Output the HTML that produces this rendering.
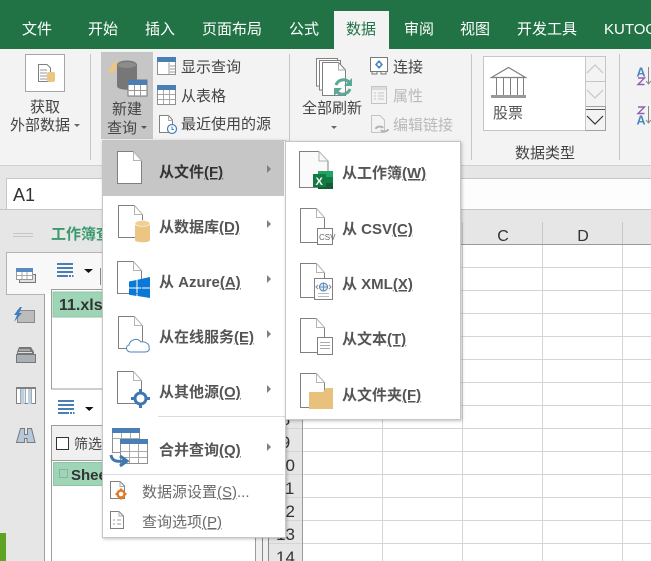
<!DOCTYPE html>
<html><head><meta charset="utf-8"><style>
html,body{margin:0;padding:0;background:#fff;width:651px;height:561px;overflow:hidden}
svg{display:block}
text{font-family:"Liberation Sans","Noto Sans CJK SC",sans-serif;font-size:15px;fill:#444}
.t{fill:#fff}
.b{font-weight:700;fill:#555}
.g{fill:#b9b9b9}
.n{font-size:17px;fill:#333}
.u{text-decoration:underline}
</style></head><body>
<svg width="651" height="561" viewBox="0 0 651 561" xmlns="http://www.w3.org/2000/svg">
<defs>
<g id="d"><path d="M.5 .5H16.500L24.500 9.500V32.500H.5Z" fill="#fff" stroke="none"/><path d="M16.500 .5H.5V32.500H24.500V9.500" fill="none" stroke="#808080"/><path d="M16.500 .5V9.500H24.500L16.500 .5" fill="none" stroke="#b4b4b4"/></g>
<g id="d2"><path d="M.5 .5H16.500L24.500 9.500V34.500H.5Z" fill="#fff" stroke="none"/><path d="M16.500 .5H.5V34.500H24.500V9.500" fill="none" stroke="#808080"/><path d="M16.500 .5V9.500H24.500L16.500 .5" fill="none" stroke="#b4b4b4"/></g>
<g id="bars" fill="#4a7fb5"><rect width="16" height="2"/><rect y="4" width="16" height="2"/><rect y="8" width="16" height="2"/><rect y="12" width="11" height="2"/><rect x="12" y="12" width="2" height="2"/><rect x="15" y="12" width="1.500" height="2"/></g>
<filter id="s" x="-10%" y="-10%" width="120%" height="120%"><feDropShadow dx="1" dy="1" stdDeviation="1.500" flood-color="#000" flood-opacity=".25"/></filter>
</defs>

<!-- base -->
<rect width="651" height="561" fill="#e6e6e6"/>
<!-- header -->
<rect width="651" height="49" fill="#217346"/>
<rect x="334" y="11" width="55" height="38" fill="#f3f3f3"/>
<text class="t" x="22" y="34">文件</text>
<text class="t" x="88" y="34">开始</text>
<text class="t" x="145" y="34">插入</text>
<text class="t" x="202" y="34">页面布局</text>
<text class="t" x="289" y="34">公式</text>
<text x="346" y="34" style="fill:#217346">数据</text>
<text class="t" x="404" y="34">审阅</text>
<text class="t" x="460" y="34">视图</text>
<text class="t" x="517" y="34">开发工具</text>
<text class="t" x="604" y="34">KUTOOLS</text>

<!-- ribbon -->
<rect y="49" width="651" height="116" fill="#f3f3f3"/>
<rect y="165" width="651" height="1" fill="#cfcfcf"/>
<g fill="#c6c6c6"><rect x="90" y="54" width="1" height="106"/><rect x="289" y="54" width="1" height="106"/><rect x="471" y="54" width="1" height="106"/><rect x="619" y="54" width="1" height="106"/></g>

<!-- get external -->
<rect x="25.500" y="54.500" width="39" height="37" fill="#fff" stroke="#a6a6a6"/>
<path d="M38.500 64.500H47L50.500 68V81.500H38.500Z" fill="#fff" stroke="#808080"/>
<path d="M40 70h7M40 73h7M40 76h7M40 79h7" stroke="#999"/>
<rect x="47" y="72" width="8" height="10" rx="2" fill="#ecc582"/>
<text x="30" y="112">获取</text>
<text x="10" y="130">外部数据</text>
<path d="M74 124h6l-3 3z" fill="#666"/>

<!-- new query -->
<rect x="101" y="52" width="52" height="87" fill="#c6c6c6"/>
<path d="M119 56L107 72l6-.5L107 79l14-15-6 .5z" fill="#ecc582"/>
<path d="M117 65c0-6 20-6 20 0V86c0 5-20 5-20 0Z" fill="#777"/>
<ellipse cx="127" cy="65" rx="9" ry="3" fill="#8c8c8c"/>
<rect x="128" y="80" width="19" height="16" fill="#fff" stroke="#777"/>
<rect x="128" y="80" width="19" height="5" fill="#4a7fb5"/>
<path d="M128 90.500h19M134.500 85v11M140.500 85v11" stroke="#999"/>
<text x="112" y="114">新建</text>
<text x="107" y="133">查询</text>
<path d="M141 126h6l-3 3z" fill="#555"/>

<!-- show queries -->
<rect x="157.500" y="57.500" width="18" height="17" fill="#fff" stroke="#909090"/>
<rect x="157" y="57" width="19" height="5" fill="#4a7fb5"/>
<path d="M169 62.500v12M170 66h5M170 69h5M170 72h5" stroke="#999"/>
<text x="181" y="72">显示查询</text>
<!-- from table -->
<rect x="157.500" y="85.500" width="18" height="19" fill="#fff" stroke="#909090"/>
<rect x="157" y="85" width="19" height="5" fill="#4a7fb5"/>
<path d="M158 94.500h17M158 99.500h17M163.500 90v14M169.500 90v14" stroke="#a8a8a8"/>
<text x="181" y="101">从表格</text>
<!-- recent -->
<path d="M159.500 115.500H168.500L172.500 120V132.500H159.500Z" fill="#fff" stroke="#808080"/>
<path d="M168.500 115.500v5h4" fill="none" stroke="#aaa"/>
<circle cx="172" cy="129" r="4.500" fill="#fff" stroke="#4a7fb5" stroke-width="1.200"/>
<path d="M172 126.500v3h2" fill="none" stroke="#4a7fb5"/>
<text x="181" y="129">最近使用的源</text>

<!-- refresh all -->
<g fill="#fff" stroke="#808080"><path d="M316.500 58.500H337.500V86H316.500Z"/><path d="M319.500 60.500H340.500V90H319.500Z"/><path d="M322.500 62.500H338.500L345.500 70V95.500H322.500Z"/></g>
<path d="M338.500 62.500V70H345.500" fill="none" stroke="#aaa"/>
<path d="M336 85a8 8 0 0 1 13-3" fill="none" stroke="#5aa896" stroke-width="3"/>
<path d="M352 78v8h-8z" fill="#5aa896"/>
<path d="M350 89a8 8 0 0 1-13 3" fill="none" stroke="#5aa896" stroke-width="3"/>
<path d="M334 96v-8h8z" fill="#5aa896"/>
<text x="302" y="113">全部刷新</text>
<path d="M331 126h6l-3 3z" fill="#666"/>

<!-- connections -->
<rect x="370.500" y="57.500" width="17" height="14" fill="#fff" stroke="#777"/>
<path d="M372 71.500v2.500h5v-2.500M381 71.500v2.500h5v-2.500" fill="none" stroke="#777"/>
<path d="M379 60l4 4.500-4 4.500-4-4.500z" fill="#4a86c0"/><circle cx="379" cy="64.500" r="1.500" fill="#fff"/>
<text x="393" y="72">连接</text>
<rect x="371.500" y="86.500" width="15" height="17" fill="none" stroke="#c4c4c4"/>
<rect x="372" y="87" width="14" height="3" fill="#dcdcdc"/>
<path d="M374 93h2M378 93h6M374 96h2M378 96h6M374 99h2M378 99h6" stroke="#c4c4c4"/>
<text class="g" x="393" y="101">属性</text>
<path d="M371.500 115.500H380L384.500 120V132.500H371.500Z" fill="none" stroke="#c4c4c4"/>
<path d="M376 129c0-3 6-3 7-1M388 129c0 3-6 3-7 1" fill="none" stroke="#b8b0b8" stroke-width="2"/>
<text class="g" x="393" y="130">编辑链接</text>

<!-- gallery -->
<rect x="483.500" y="56.500" width="122" height="74" fill="#fff" stroke="#c6c6c6"/>
<rect x="585" y="57" width="20" height="24" fill="#f3f3f3"/>
<rect x="585" y="82" width="20" height="24" fill="#f3f3f3"/>
<rect x="585.500" y="106.500" width="20" height="24" fill="#f3f3f3" stroke="#a0a0a0"/>
<path d="M585.500 56.500V130.500M585 81.500h21" stroke="#c6c6c6"/>
<path d="M587 73l8-8 8 8M587 90l8 8 8-8" fill="none" stroke="#c6c6c6" stroke-width="1.200"/>
<path d="M586 109.500h19" stroke="#555"/>
<path d="M587 116l8 8 8-8" fill="none" stroke="#333" stroke-width="1.200"/>
<path d="M491.500 77.500L508.500 67.500 525.500 77.500Z" fill="none" stroke="#808080" stroke-width="1.200"/>
<path d="M496.500 78v17M503.500 78v17M510.500 78v17M517.500 78v17M523.500 78v17" stroke="#808080"/>
<rect x="491" y="95" width="35" height="3" fill="#999"/>
<text x="493" y="118" style="fill:#555">股票</text>
<text x="515" y="158">数据类型</text>

<!-- sort -->
<text x="636.500" y="76.500" style="font-size:12.500px;font-weight:700;fill:#4a86c0">A</text>
<path d="M638 78h6.500l-6.500 6.500h6.500" fill="none" stroke="#9060b0" stroke-width="1.400"/>
<path d="M638 107h6.500l-6.500 6.500h6.500" fill="none" stroke="#9060b0" stroke-width="1.400"/>
<text x="636.500" y="124.500" style="font-size:12.500px;font-weight:700;fill:#4a86c0">A</text>
<path d="M648.500 67v17M646 81l2.500 3 2.500-3M648.500 106v17M646 120l2.500 3 2.500-3" fill="none" stroke="#888"/>

<!-- formula bar -->
<rect y="178" width="651" height="1" fill="#c6c6c6"/>
<rect y="179" width="651" height="30" fill="#fdfdfd"/>
<rect y="178" width="6" height="32" fill="#e6e6e6"/>
<rect x="6.500" y="178.500" width="110" height="31" fill="#fff" stroke="#c6c6c6"/>
<text x="13" y="201" style="font-size:18px;fill:#333">A1</text>
<rect y="209" width="651" height="1" fill="#c6c6c6"/>

<!-- column header -->
<rect x="268" y="222" width="383" height="22" fill="#e6e6e6"/>
<rect x="268" y="244" width="383" height="1" fill="#9a9a9a"/>
<g fill="#c8c8c8"><rect x="462" y="222" width="1" height="22"/><rect x="542" y="222" width="1" height="22"/><rect x="622" y="222" width="1" height="22"/></g>
<text x="503" y="241" text-anchor="middle" style="font-size:16px;fill:#333">C</text>
<text x="583" y="241" text-anchor="middle" style="font-size:16px;fill:#333">D</text>

<!-- grid -->
<rect x="268" y="245" width="383" height="316" fill="#fff"/>
<rect x="268" y="245" width="34" height="316" fill="#e6e6e6"/>
<g fill="#d4d4d4">
<rect x="382" y="245" width="1" height="316"/><rect x="462" y="245" width="1" height="316"/><rect x="542" y="245" width="1" height="316"/><rect x="622" y="245" width="1" height="316"/>
<rect x="268" y="267" width="383" height="1"/><rect x="268" y="290" width="383" height="1"/><rect x="268" y="313" width="383" height="1"/><rect x="268" y="336" width="383" height="1"/><rect x="268" y="359" width="383" height="1"/><rect x="268" y="382" width="383" height="1"/><rect x="268" y="405" width="383" height="1"/><rect x="268" y="428" width="383" height="1"/><rect x="268" y="451" width="383" height="1"/><rect x="268" y="474" width="383" height="1"/><rect x="268" y="497" width="383" height="1"/><rect x="268" y="520" width="383" height="1"/><rect x="268" y="543" width="383" height="1"/>
</g>
<rect x="302" y="222" width="1" height="339" fill="#9a9a9a"/>
<g text-anchor="middle">
<text class="n" x="285.500" y="425">8</text>
<text class="n" x="285.500" y="448">9</text>
<text class="n" x="285.500" y="471">10</text>
<text class="n" x="285.500" y="494">11</text>
<text class="n" x="285.500" y="517">12</text>
<text class="n" x="285.500" y="540">13</text>
<text class="n" x="285.500" y="563">14</text>
</g>

<!-- left pane -->
<rect x="0" y="210" width="268" height="351" fill="#e6e6e6"/>
<path d="M13 233.500h20M13 236.500h20" stroke="#c6c6c6"/>
<text x="51" y="239" style="fill:#3a9a6e;font-weight:700;font-size:15px">工作簿查询</text>
<rect x="6" y="252" width="96" height="1" fill="#b5b5b5"/>
<rect x="6" y="252" width="1" height="43" fill="#b5b5b5"/>
<rect x="7" y="253" width="96" height="41" fill="#f8f8f8"/>
<rect x="45" y="294" width="211" height="267" fill="#fff"/>
<rect x="7" y="294" width="38" height="1" fill="#b5b5b5"/>
<rect x="44" y="294" width="1" height="267" fill="#a0a0a0"/>
<rect x="255" y="537" width="1" height="24" fill="#8a8a8a"/>
<rect x="256" y="537" width="12" height="24" fill="#f0f0f0"/>
<rect x="262" y="537" width="1" height="24" fill="#8a8a8a"/>
<rect x="268" y="537" width="1" height="24" fill="#8a8a8a"/>
<!-- left-pane icons -->
<rect x="19.500" y="274.500" width="16" height="8" fill="#e0e0e0" stroke="#777"/>
<rect x="16.500" y="268.500" width="16" height="11" fill="#fff" stroke="#999"/>
<rect x="16" y="268" width="17" height="4" fill="#5a8ac0"/>
<path d="M17 275.500h15M22 272v7M27 272v7" stroke="#aaa"/>
<use href="#bars" x="57" y="263"/>
<path d="M84 269h9l-4.500 4z" fill="#111"/>
<rect x="100" y="268" width="1" height="17" fill="#888"/>
<rect x="17.500" y="310.500" width="17" height="12" fill="#bcbcbc" stroke="#8a8a8a"/>
<path d="M20 307l-6 8h3l-3 7 8-9h-3l3-6z" fill="#3f7fc0"/>
<path d="M19 347h12l3 5v5H17v-5z" fill="#777"/>
<rect x="16.500" y="354.500" width="19" height="8" fill="#aab0b8" stroke="#777"/>
<path d="M19 350h11M18 352.500h14" stroke="#ddd"/>
<rect x="16.500" y="387.500" width="19" height="16" fill="#fff" stroke="#808080"/>
<rect x="16" y="387" width="20" height="2" fill="#808080"/>
<rect x="21" y="389" width="3.500" height="15" fill="#bcd0e4"/><rect x="28" y="389" width="3.500" height="15" fill="#bcd0e4"/>
<path d="M20.500 389v14M25.500 389v14M31.500 389v14" stroke="#aaa"/>
<path d="M20.500 428.500h4v6h3v-6h4l3.500 14h-8v-4h-2.500v4h-8z" fill="#b6c8dc" stroke="#7a7a7a"/>

<!-- list 1 -->
<rect x="51.500" y="289.500" width="60" height="99.500" fill="#fff" stroke="#9c9c9c"/>
<rect x="53" y="292" width="60" height="25" fill="#9fd5b7" stroke="#8fc5a7"/>
<text x="59" y="310" style="font-weight:700;font-size:16px;fill:#333">11.xlsx</text>
<use href="#bars" x="58" y="400"/>
<path d="M85 407h8.500l-4.250 4z" fill="#111"/>
<!-- list 2 -->
<rect x="51.500" y="425.500" width="204" height="140" fill="#fff" stroke="#9c9c9c"/>
<rect x="52" y="426" width="60" height="34" fill="#f0f0f0"/>
<rect x="52" y="460" width="60" height="1" fill="#9c9c9c"/>
<rect x="56.500" y="437.500" width="12" height="12" fill="#fff" stroke="#333"/>
<text x="74" y="449" style="font-size:14px;fill:#444">筛选</text>
<rect x="53.500" y="462.500" width="70" height="23" fill="#9fd5b7" stroke="#8fc5a7"/>
<rect x="59.500" y="469.500" width="8" height="8" fill="none" stroke="#8fb09e"/>
<text x="71" y="480" style="font-weight:700;font-size:15px;fill:#333">Sheet</text>
<rect x="0" y="533" width="6" height="28" fill="#5ea423"/>

<!-- menu -->
<rect x="102.500" y="140.500" width="183" height="397" fill="#fff" stroke="#c6c6c6" filter="url(#s)"/>
<rect x="103" y="141" width="181" height="55" fill="#c6c6c6"/>
<use href="#d" x="117" y="151"/>
<text class="b" x="159" y="177" style="fill:#333">从文件<tspan class="u">(F)</tspan></text>
<path d="M267 165l4 4-4 4z" fill="#808080"/>

<use href="#d" x="118" y="205"/>
<path d="M135 225c0-3 15-3 15 0V240c0 3-15 3-15 0Z" fill="#ecc582"/>
<ellipse cx="142.500" cy="223.500" rx="7.500" ry="3" fill="#f0cf95" stroke="#fff" stroke-width=".6"/>
<text class="b" x="159" y="232">从数据库<tspan class="u">(D)</tspan></text>
<path d="M267 220l4 4-4 4z" fill="#808080"/>

<use href="#d" x="117" y="261"/>
<path d="M129 281.500l7.500-1.500v7.500h-7.500zM137.500 279.800l12.500-2.800v10.500h-12.500zM129 288.500h7.500v7.500l-7.500-1.200zM137.500 288.500H150V298l-12.500-2z" fill="#0a78d7"/>
<text class="b" x="159" y="287">从 Azure<tspan class="u">(A)</tspan></text>
<path d="M267 275l4 4-4 4z" fill="#808080"/>

<use href="#d" x="118" y="316"/>
<path d="M131 352c-5 0-6-6-2-7 1-5 8-8 12-3 4-1 9 2 8 6 1 2-1 4-4 4Z" fill="#fff" stroke="#4a86c0"/>
<text class="b" x="159" y="342">从在线服务<tspan class="u">(E)</tspan></text>
<path d="M267 330l4 4-4 4z" fill="#808080"/>

<use href="#d" x="117" y="371"/>
<circle cx="140.500" cy="398.500" r="5.500" fill="#fff" stroke="#3f78b0" stroke-width="3"/>
<rect x="139" y="389" width="3" height="4" fill="#3f78b0"/><rect x="139" y="404" width="3" height="4" fill="#3f78b0"/><rect x="131" y="397" width="4" height="3" fill="#3f78b0"/><rect x="146" y="397" width="4" height="3" fill="#3f78b0"/>
<text class="b" x="159" y="397">从其他源<tspan class="u">(O)</tspan></text>
<path d="M267 385l4 4-4 4z" fill="#808080"/>

<rect x="158" y="416" width="127" height="1" fill="#dcdcdc"/>

<rect x="112.500" y="428.500" width="27" height="24" fill="#fff" stroke="#909090"/>
<rect x="112" y="428" width="28" height="5" fill="#4a7fb5"/>
<path d="M113 438.500h26M121.500 433v12M130.500 433v12" stroke="#aaa"/>
<rect x="120.500" y="439.500" width="27" height="24" fill="#fff" stroke="#909090"/>
<rect x="120" y="439" width="28" height="5" fill="#4a7fb5"/>
<path d="M121 451.500h26M121 457.500h26M129.500 444v19M138.500 444v19" stroke="#aaa"/>
<path d="M111 455c1 6 5 7 14 6" fill="none" stroke="#3f78b0" stroke-width="3"/>
<path d="M120 456l7 5-7 5" fill="none" stroke="#3f78b0" stroke-width="3"/>
<text class="b" x="159" y="455">合并查询<tspan class="u">(Q)</tspan></text>
<path d="M267 443l4 4-4 4z" fill="#808080"/>

<rect x="103" y="474" width="181" height="1" fill="#dcdcdc"/>

<path d="M110.500 481.500H120L124.500 486V498.500H110.500Z" fill="#fff" stroke="#808080"/>
<path d="M120 481.500v5h4.500" fill="none" stroke="#aaa"/>
<circle cx="121" cy="494" r="3.500" fill="#fff" stroke="#e07b24" stroke-width="2.400"/>
<path d="M121 488.500v2M121 497.500v2M115.500 494h2M124.500 494h2" stroke="#e07b24" stroke-width="2"/>
<text x="142" y="497" style="fill:#6a6a6a">数据源设置<tspan class="u">(S)</tspan>...</text>
<path d="M110.500 511.500H119L123.500 516V528.500H110.500Z" fill="#fff" stroke="#808080"/>
<path d="M119 511.500v4.500h4.500" fill="none" stroke="#aaa"/>
<path d="M113 520h2M117 520h4M113 524h2M117 524h4" stroke="#999"/>
<text x="142" y="527" style="fill:#6a6a6a">查询选项<tspan class="u">(P)</tspan></text>

<!-- submenu -->
<rect x="285.500" y="141.500" width="175" height="278" fill="#fff" stroke="#c6c6c6" filter="url(#s)"/>
<path d="M299.500 151.500H319L328 161V187.500H299.500Z" fill="#fafafa" stroke="none"/>
<path d="M319 151.500H299.500V187.500H328V161" fill="none" stroke="#808080"/>
<path d="M319 151.500V161H328L319 151.500" fill="none" stroke="#b4b4b4"/>
<rect x="318" y="171" width="15" height="18" fill="#21a366"/>
<rect x="318" y="177" width="15" height="6" fill="#107c41"/>
<rect x="318" y="183" width="15" height="6" fill="#185c37"/>
<rect x="313" y="174" width="13" height="13" fill="#107c41"/>
<text x="315.500" y="185" style="font-size:11px;font-weight:700;fill:#fff">X</text>
<text class="b" x="342" y="178">从工作簿<tspan class="u">(W)</tspan></text>

<use href="#d2" x="300" y="208"/>
<rect x="317.500" y="228.500" width="15" height="16" fill="#fff" stroke="#808080"/>
<text x="319" y="240" style="font-size:8px;fill:#666">CSV</text>
<text class="b" x="342" y="234">从 CSV<tspan class="u">(C)</tspan></text>

<use href="#d2" x="300" y="263"/>
<rect x="314.500" y="278.500" width="18" height="21" fill="#fff" stroke="#808080"/>
<circle cx="323.500" cy="287" r="4" fill="#dce8f4" stroke="#4a7fb5"/>
<path d="M319.500 287h8M323.500 283v8" stroke="#4a7fb5" stroke-width=".8"/>
<path d="M318 285l-2 2 2 2M329 285l2 2-2 2" fill="none" stroke="#888"/>
<path d="M318 293.500h11M318 296.500h11" stroke="#bbb"/>
<text class="b" x="342" y="289">从 XML<tspan class="u">(X)</tspan></text>

<use href="#d2" x="300" y="318"/>
<rect x="317.500" y="337.500" width="15" height="17" fill="#fff" stroke="#808080"/>
<path d="M320 342.500h10M320 345.500h10M320 348.500h10" stroke="#aaa"/>
<text class="b" x="342" y="344">从文本<tspan class="u">(T)</tspan></text>

<use href="#d2" x="300" y="373"/>
<path d="M309 392h14l3-4h7v21H309Z" fill="#e8c27c"/>
<text class="b" x="342" y="400">从文件夹<tspan class="u">(F)</tspan></text>
</svg>
</body></html>
